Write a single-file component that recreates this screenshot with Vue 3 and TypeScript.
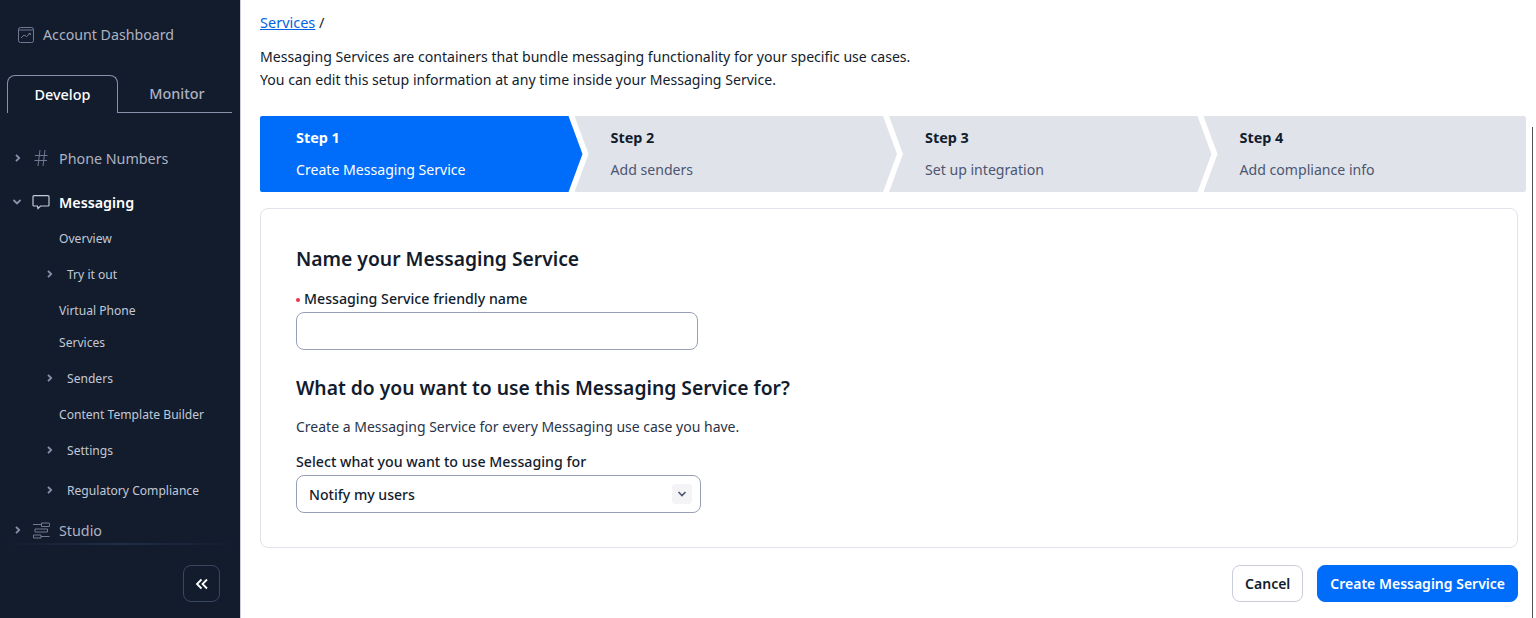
<script setup lang="ts">
interface NavItem {
  label: string;
  level: number;
  caret?: 'right' | 'down';
  icon?: 'hash' | 'chat' | 'studio';
  active?: boolean;
  height: number;
}

const navItems: NavItem[] = [
  { label: 'Phone Numbers', level: 0, caret: 'right', icon: 'hash', height: 44 },
  { label: 'Messaging', level: 0, caret: 'down', icon: 'chat', active: true, height: 44 },
  { label: 'Overview', level: 1, height: 28 },
  { label: 'Try it out', level: 2, caret: 'right', height: 44 },
  { label: 'Virtual Phone', level: 1, height: 28 },
  { label: 'Services', level: 1, height: 36 },
  { label: 'Senders', level: 2, caret: 'right', height: 36 },
  { label: 'Content Template Builder', level: 1, height: 36 },
  { label: 'Settings', level: 2, caret: 'right', height: 36 },
  { label: 'Regulatory Compliance', level: 2, caret: 'right', height: 44 },
  { label: 'Studio', level: 0, caret: 'right', icon: 'studio', height: 36 },
];

const steps = [
  { title: 'Step 1', text: 'Create Messaging Service' },
  { title: 'Step 2', text: 'Add senders' },
  { title: 'Step 3', text: 'Set up integration' },
  { title: 'Step 4', text: 'Add compliance info' },
];
</script>

<template>
  <div class="page">
    <aside class="sidebar">
      <div class="account">
        <svg class="account-icon" width="16" height="16" viewBox="0 0 16 16" fill="none" stroke="currentColor" stroke-width="1">
          <rect x="0.5" y="0.5" width="15" height="15" rx="2" />
          <path d="M0.5 3h15" />
          <path d="M3 11l3-3 2.500 1.500L12 6.500M10.500 6.500H12.500V8" />
        </svg>
        <span>Account Dashboard</span>
      </div>

      <div class="tabs">
        <div class="tab tab-active">Develop</div>
        <div class="tab tab-plain">Monitor</div>
      </div>

      <nav class="nav">
        <div
          v-for="item in navItems"
          :key="item.label"
          class="nav-row"
          :class="[`level-${item.level}`, { active: item.active }]"
          :style="{ height: item.height + 'px' }"
        >
          <svg v-if="item.caret === 'right'" class="caret" width="8" height="10" viewBox="0 0 8 10" fill="none" stroke="currentColor" stroke-width="1.800">
            <path d="M2 1.800 5.200 5 2 8.200" />
          </svg>
          <svg v-else-if="item.caret === 'down'" class="caret" width="10" height="8" viewBox="0 0 10 8" fill="none" stroke="currentColor" stroke-width="1.800">
            <path d="M1.500 2 5 5.500 8.500 2" />
          </svg>
          <span v-if="item.icon" class="nav-icon">
            <svg v-if="item.icon === 'hash'" width="18" height="18" viewBox="0 0 18 18" fill="none" stroke="currentColor" stroke-width="1">
              <path d="M8 1 6 17M13 1 11 17M3 6.500h12.500M2.500 11.500h12.500" />
            </svg>
            <svg v-else-if="item.icon === 'chat'" width="18" height="18" viewBox="0 0 18 18" fill="none" stroke="currentColor" stroke-width="1.200">
              <path d="M2 2.600h14a1 1 0 0 1 1 1v8.400a1 1 0 0 1-1 1H8.500L6 15.500 5.500 13H2a1 1 0 0 1-1-1V3.600a1 1 0 0 1 1-1z" />
            </svg>
            <svg v-else width="18" height="18" viewBox="0 0 18 18" fill="none" stroke="currentColor" stroke-width="1">
              <path d="M9.500 2h7.500a.5.5 0 0 1 .5.500v2.500a.5.5 0 0 1-.5.500H9.500zM3 8h12.500v3H3zM1.500 14H9v3H1.500zM1 3.500h8.500M9 15.500h8.500" />
            </svg>
          </span>
          <span>{{ item.label }}</span>
        </div>
      </nav>

      <div class="sidebar-footer">
        <button class="collapse" type="button">
          <svg width="14" height="12" viewBox="0 0 14 12" fill="none" stroke="currentColor" stroke-width="1.800">
            <path d="M6.500 1.500 2 6l4.500 4.500M12 1.500 7.500 6l4.500 4.500" />
          </svg>
        </button>
      </div>
    </aside>

    <main class="main">
      <div class="breadcrumb"><a href="#">Services</a> /</div>
      <p class="intro">
        Messaging Services are containers that bundle messaging functionality for your specific use cases.<br>
        You can edit this setup information at any time inside your Messaging Service.
      </p>

      <div class="stepper">
        <div v-for="(step, i) in steps" :key="step.title" class="step" :class="{ current: i === 0 }">
          <div class="step-title">{{ step.title }}</div>
          <div class="step-text">{{ step.text }}</div>
        </div>
      </div>

      <section class="card">
        <h2 class="heading">Name your Messaging Service</h2>
        <label class="label"><span class="required"></span>Messaging Service friendly name</label>
        <div class="input"></div>

        <h2 class="heading heading-use">What do you want to use this Messaging Service for?</h2>
        <p class="help">Create a Messaging Service for every Messaging use case you have.</p>
        <label class="label label-select">Select what you want to use Messaging for</label>
        <div class="select">
          <span>Notify my users</span>
          <span class="select-caret">
            <svg width="10" height="8" viewBox="0 0 10 8" fill="none" stroke="currentColor" stroke-width="1.600">
              <path d="M1.500 2 5 5.500 8.500 2" />
            </svg>
          </span>
        </div>
      </section>

      <div class="actions">
        <button class="btn" type="button">Cancel</button>
        <button class="btn btn-primary" type="button">Create Messaging Service</button>
      </div>

      <div class="scroll-line"></div>
    </main>
  </div>
</template>

<style>
html,
body {
  margin: 0;
  background: #fff;
}
</style>

<style scoped>
.page {
  display: flex;
  width: 1536px;
  height: 618px;
  overflow: hidden;
  font-family: "Noto Sans", sans-serif;
  color: #121c2d;
}

.sidebar {
  width: 241px;
  flex-shrink: 0;
  background: #121c2d;
  color: #c3c9d6;
  display: flex;
  flex-direction: column;
  border-right: 1px solid #cacdd8;
  box-sizing: border-box;
}

.account {
  display: flex;
  align-items: center;
  gap: 9px;
  height: 69px;
  padding-left: 18px;
  font-size: 14.200px;
  color: #aeb2c1;
}

.account-icon {
  flex-shrink: 0;
  color: #6e7a94;
}

.tabs {
  display: flex;
  height: 38px;
  margin: 6px 8px 0 7px;
  font-size: 14.400px;
  font-weight: 500;
}

.tab {
  display: flex;
  align-items: center;
  justify-content: center;
  padding-bottom: 1px;
  box-sizing: border-box;
  border-bottom: 1px solid #8891aa;
  color: #aeb2c1;
}

.tab-active {
  width: 111px;
  color: #fff;
  border: 1px solid #8891aa;
  border-bottom: none;
  border-radius: 8px 8px 0 0;
}

.tab-plain {
  flex: 1;
  padding-left: 4px;
}

.nav {
  margin-top: 23px;
  flex: 1;
  overflow: hidden;
}

.nav-row {
  position: relative;
  display: flex;
  align-items: center;
  font-size: 12.100px;
  color: #c3c9d6;
}

.level-0 {
  padding-left: 59px;
  font-size: 14.300px;
  color: #aeb2c1;
}

.level-1 {
  padding-left: 59px;
}

.level-2 {
  padding-left: 67px;
}

.active {
  color: #fff;
  font-weight: 600;
}

.caret {
  position: absolute;
  color: #8891aa;
}

.level-0 .caret {
  left: 14px;
}

.level-0.active .caret {
  left: 12px;
}

.level-2 .caret {
  left: 46px;
}

.nav-icon {
  position: absolute;
  left: 32px;
  display: flex;
  color: #6e7a94;
}

.active .nav-icon {
  color: #c3c9d6;
}

.sidebar-footer {
  position: relative;
  height: 75px;
  flex-shrink: 0;
  display: flex;
  justify-content: flex-end;
  align-items: flex-start;
  padding: 22px 20px 0 0;
  box-sizing: border-box;
}

.sidebar-footer::before {
  content: "";
  position: absolute;
  left: 0;
  right: 0;
  top: 0;
  height: 2px;
  background: linear-gradient(90deg, transparent, #1f2e47 50%, transparent);
}

.collapse {
  width: 37px;
  height: 37px;
  border: 1px solid #394762;
  border-radius: 8px;
  background: transparent;
  color: #fff;
  display: flex;
  align-items: center;
  justify-content: center;
  padding: 0;
}

.main {
  position: relative;
  flex: 1;
  padding: 13px 10px 0 19px;
  min-width: 0;
}

.breadcrumb {
  font-size: 14.500px;
  line-height: 18px;
}

.breadcrumb a {
  color: #0263e0;
}

.intro {
  margin: 14px 0 0;
  font-size: 14.100px;
  line-height: 23px;
  color: #121c2d;
}

.stepper {
  display: flex;
  height: 76px;
  margin-top: 25px;
}

.step {
  width: 322.500px;
  margin-left: -8px;
  padding-left: 36px;
  box-sizing: border-box;
  background: #e1e3ea;
  clip-path: polygon(0 0, calc(100% - 14px) 0, 100% 50%, calc(100% - 14px) 100%, 0 100%, 14px 50%);
}

.step:first-child {
  margin-left: 0;
  border-radius: 2px 0 0 2px;
  clip-path: polygon(0 0, calc(100% - 14px) 0, 100% 50%, calc(100% - 14px) 100%, 0 100%);
}

.step:last-child {
  border-radius: 0 2px 2px 0;
  clip-path: polygon(0 0, 100% 0, 100% 100%, 0 100%, 14px 50%);
}

.current {
  background: #006dfa;
  color: #fff;
}

.step-title {
  margin-top: 13px;
  font-size: 14.400px;
  line-height: 17px;
  font-weight: 700;
}

.step-text {
  margin-top: 15px;
  font-size: 14.100px;
  line-height: 17px;
  color: #4b5671;
}

.current .step-text {
  color: #fff;
}

.card {
  width: 1258px;
  height: 340px;
  box-sizing: border-box;
  margin-top: 16px;
  padding: 37px 35px 0;
  border: 1px solid #e1e3ea;
  border-radius: 8px;
}

.heading {
  margin: 0;
  font-size: 19.300px;
  line-height: 26px;
  font-weight: 600;
}

.heading-use {
  margin-top: 25px;
}

.label {
  display: block;
  margin-top: 18px;
  font-size: 14.200px;
  line-height: 17px;
  font-weight: 500;
}

.required {
  display: inline-block;
  width: 4px;
  height: 4px;
  margin: 0 4px 2px 0;
  border-radius: 50%;
  background: #eb3446;
}

.input {
  width: 402px;
  height: 38px;
  box-sizing: border-box;
  margin-top: 5px;
  border: 1px solid #98a0b8;
  border-radius: 8px;
}

.help {
  margin: 17px 0 0;
  font-size: 14px;
  line-height: 17px;
  color: #2a3449;
}

.label-select {
  margin-top: 18px;
}

.select {
  width: 405px;
  height: 38px;
  box-sizing: border-box;
  margin-top: 5px;
  padding: 0 8px 0 12px;
  display: flex;
  align-items: center;
  justify-content: space-between;
  border: 1px solid #98a0b8;
  border-radius: 8px;
  font-size: 14.100px;
  font-weight: 500;
}

.select-caret {
  width: 20px;
  height: 20px;
  display: flex;
  align-items: center;
  justify-content: center;
  background: #f4f4f6;
  border-radius: 4px;
  color: #4b5671;
}

.actions {
  width: 1258px;
  display: flex;
  justify-content: flex-end;
  gap: 14px;
  margin-top: 17px;
}

.btn {
  height: 37px;
  padding: 0 12px;
  border: 1px solid #cacdd8;
  border-radius: 8px;
  background: #fff;
  color: #121c2d;
  font: 600 14px "Noto Sans", sans-serif;
}

.btn-primary {
  background: #006dfa;
  border-color: #006dfa;
  color: #fff;
}

.scroll-line {
  position: absolute;
  left: 1291px;
  top: 127px;
  bottom: 0;
  width: 1px;
  background: #555;
}
</style>
